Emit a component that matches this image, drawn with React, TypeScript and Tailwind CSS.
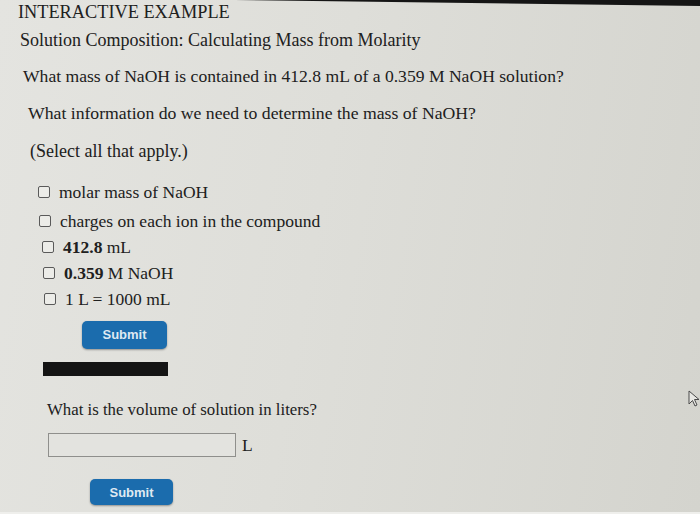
import { ReactNode } from 'react'

const options: { label: ReactNode; pad: string; mt: string }[] = [
  { label: 'molar mass of NaOH', pad: 'pl-[38px]', mt: 'mt-[15px]' },
  { label: 'charges on each ion in the compound', pad: 'pl-[39px]', mt: 'mt-[3px]' },
  { label: <><b>412.8</b> mL</>, pad: 'pl-[42px]', mt: 'mt-0' },
  { label: <><b>0.359</b> M NaOH</>, pad: 'pl-[43px]', mt: 'mt-0' },
  { label: '1 L = 1000 mL', pad: 'pl-[44px]', mt: 'mt-0' },
]

function SubmitButton({ className }: { className: string }) {
  return (
    <button
      type="button"
      className={`flex items-center justify-center rounded-[5px] bg-[#1b6cad] font-['Liberation_Sans',Arial,sans-serif] text-[13px] font-bold text-[#dfe9f2] shadow-[0_1px_2px_rgba(0,0,0,0.35)] ${className}`}
    >
      Submit
    </button>
  )
}

export default function App() {
  return (
    <div className="relative h-[514px] w-[700px] overflow-hidden bg-[linear-gradient(100deg,#e4e4e0_0%,#dedeD9_45%,#d4d4ce_100%)] font-['Liberation_Serif','Times_New_Roman',serif] text-[17.5px] text-[#202020]">
      {/* screen edge at the top right */}
      <svg className="absolute left-0 top-0" width="700" height="8" viewBox="0 0 700 8">
        <polygon points="235,0 700,0 700,6" fill="#151515" />
      </svg>

      <div className="flex h-[26px] items-center pl-[18px] text-[18.3px]">INTERACTIVE EXAMPLE</div>
      <div className="mt-[1px] flex h-[26px] items-center pl-[20px] text-[18px]">
        Solution Composition: Calculating Mass from Molarity
      </div>

      <div className="mt-[10px] flex h-[26px] items-center pl-[23px] text-[17.6px]">
        What mass of NaOH is contained in 412.8 mL of a 0.359 M NaOH solution?
      </div>
      <div className="mt-[11px] flex h-[26px] items-center pl-[28px] text-[17.7px]">
        What information do we need to determine the mass of NaOH?
      </div>
      <div className="mt-[12px] flex h-[26px] items-center pl-[30px] text-[18px]">(Select all that apply.)</div>

      {options.map((o, i) => (
        <label key={i} className={`flex h-[26px] items-center gap-[9px] ${o.pad} ${o.mt}`}>
          <span className="h-[12px] w-[12px] shrink-0 rounded-[2px] border-[1.5px] border-[#5a5a5a] bg-[#ecece8]" />
          <span>{o.label}</span>
        </label>
      ))}

      <div className="mt-[9px] pl-[82px]">
        <SubmitButton className="h-[28px] w-[85px]" />
      </div>

      <div className="ml-[43px] mt-[13px] h-[14px] w-[125px] bg-[#141414]" />

      <div className="mt-[21px] flex h-[26px] items-center pl-[47px] text-[16.8px]">
        What is the volume of solution in liters?
      </div>

      <div className="mt-[9px] flex items-center gap-[6px] pl-[48px]">
        <input
          type="text"
          aria-label="volume"
          className="h-[24px] w-[188px] border border-[#8f8f8c] bg-[#e3e3df] outline-none"
        />
        <span>L</span>
      </div>

      <div className="mt-[21px] pl-[90px]">
        <SubmitButton className="h-[26px] w-[83px]" />
      </div>

      {/* mouse pointer */}
      <svg className="absolute left-[688px] top-[390px]" width="14" height="18" viewBox="0 0 14 18">
        <path d="M1 1 L1 14 L4.5 10.5 L7 16 L9 15 L6.5 9.5 L11 9.5 Z" fill="#e8e8e4" stroke="#4a4a4a" strokeWidth="1" strokeLinejoin="round" />
      </svg>

      <div className="absolute bottom-0 left-0 h-[2px] w-full bg-[#efefec]" />
    </div>
  )
}
